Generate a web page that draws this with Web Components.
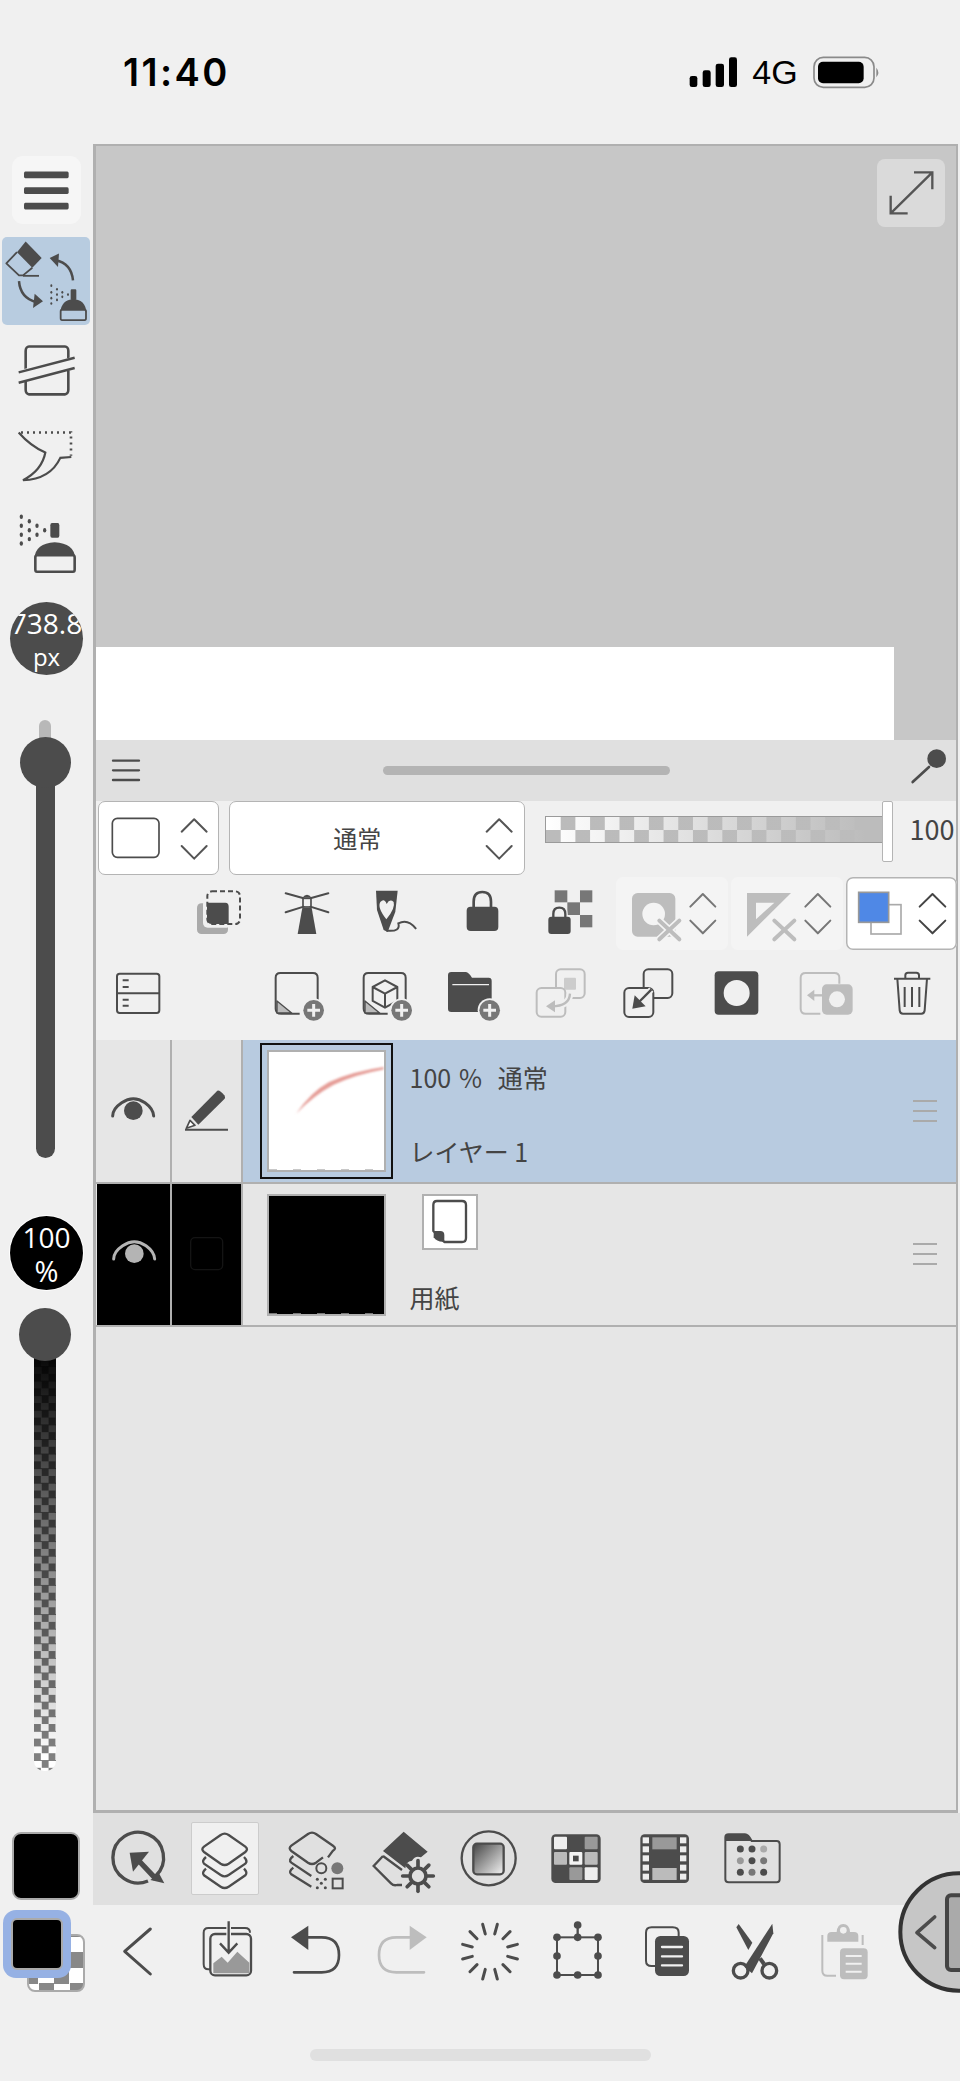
<!DOCTYPE html>
<html lang="ja">
<head>
<meta charset="utf-8">
<title>Layers</title>
<style>
html,body{margin:0;padding:0;background:#f0f0f0;overflow:hidden}
body{font-family:"Noto Sans CJK JP","Noto Sans",sans-serif;color:#444}
</style>
</head>
<body>
<app-shell></app-shell>
<script>
const D='#4c4c4c', G='#bdbdbd', BG='#f0f0f0';
const ICONS={};
function ic(name,x,y,w,h,inner,opt={}){ICONS[name]={x,y,w,h,inner,sx:opt.sx||1/3,sy:opt.sy||1/3,ns:opt.ns};}
const rail={sx:1/3,sy:1/2.24,ns:true};
const dots=(a)=>a.map(([x,y,r,c])=>`<circle cx="${x}" cy="${y}" r="${r}" fill="${c||D}" stroke="none"/>`).join('');
const plus=(cx,cy,bg)=>`<circle cx="${cx}" cy="${cy}" r="36" fill="${bg}" stroke="none"/><circle cx="${cx}" cy="${cy}" r="31" fill="#777" stroke="none"/><path d="M${cx-19} ${cy}H${cx+19}M${cx} ${cy-19}V${cy+19}" stroke="${bg}" stroke-width="9" stroke-linecap="butt"/>`;
const chev=(x0,x1,yU0,yU1,yD0,yD1,c,sw=6)=>{const m=(x0+x1)/2;return `<path d="M${x0} ${yU0}L${m} ${yU1}L${x1} ${yU0}M${x0} ${yD0}L${m} ${yD1}L${x1} ${yD0}" stroke="${c}" stroke-width="${sw}" stroke-linecap="round" stroke-linejoin="round"/>`;};
const ticks=(cx,cy,r0,r1,n,sw,c,off=0)=>{let s='';for(let i=0;i<n;i++){const a=(i+off)/n*Math.PI*2;s+=`<line x1="${(cx+Math.cos(a)*r0).toFixed(1)}" y1="${(cy+Math.sin(a)*r0).toFixed(1)}" x2="${(cx+Math.cos(a)*r1).toFixed(1)}" y2="${(cy+Math.sin(a)*r1).toFixed(1)}" stroke="${c}" stroke-width="${sw}" stroke-linecap="round"/>`;}return s;};

ic('signal',145,75,145,95,[[147,135,23,33],[186,118,24,50],[225,98,25,70],[265,79,24,89]].map(([x,y,w,h])=>`<rect x="${x}" y="${y}" width="${w}" height="${h}" rx="7" fill="#000" stroke="none"/>`).join(''));
ic('battery',520,74,205,96,`<rect x="523" y="78" width="180" height="90" rx="28" stroke="#8a8a8a" stroke-width="5"/><rect x="535" y="91" width="137" height="65" rx="15" fill="#000" stroke="none"/><path d="M710 109Q722 123 710 138Z" fill="#8a8a8a" stroke="none"/>`);
ic('expand',711,387,205,203,`<path d="M752 550L877 427M822 427H877V478M752 497V550H803" stroke="#555" stroke-width="7"/>`);

ic('r-menu',36,350,206,152,`<rect x="72" y="385" width="134" height="15" rx="4" fill="${D}" stroke="none"/><rect x="72" y="420" width="134" height="15" rx="4" fill="${D}" stroke="none"/><rect x="72" y="455" width="134" height="15" rx="4" fill="${D}" stroke="none"/>`,rail);
ic('r-swap',7,531,263,196,`
<path d="M52 565L78 541L126 578L98 600Z" fill="${D}" stroke="none"/>
<path d="M52 565L20 590L58 617L70 617L98 600" stroke="${D}" stroke-width="1.8" stroke-linejoin="round"/>
<path d="M70 618H118" stroke="${D}" stroke-width="1.8"/>
<path d="M220 628Q215 590 168 583" stroke="${D}" stroke-width="2.5"/><path d="M150 578L178 568L175 598Z" fill="${D}" stroke="none"/>
<path d="M58 630Q62 668 110 677" stroke="${D}" stroke-width="2.5"/><path d="M130 675L100 690L105 658Z" fill="${D}" stroke="none"/>
${dots([[155,640,3],[155,655,3],[155,668,3],[155,680,3],[172,648,3],[172,660,3],[172,672,3],[188,655,3],[188,665,3],[205,660,3]])}
<rect x="213" y="648" width="17" height="24" rx="3" fill="${D}" stroke="none"/>
<path d="M182 700Q185 672 221 670Q258 672 260 700Z" fill="${D}" stroke="none"/>
<rect x="183" y="694" width="76" height="23" rx="4" fill="#b8cce0" stroke="${D}" stroke-width="1.8"/>`,rail);
ic('r-ruler',50,770,178,123,`<rect x="76" y="778" width="128" height="107" rx="10" stroke="${D}" stroke-width="2.6"/>
<path d="M50 847L228 814L228 813L50 846Z" stroke="${BG}" stroke-width="12"/>
<path d="M55 836L223 803M55 859L223 826" stroke="${D}" stroke-width="2.4"/>`,rail);
ic('r-lasso',50,960,170,125,`<path d="M62 970H212V1022" stroke="${D}" stroke-width="2.6" stroke-dasharray="2 4"/>
<path d="M55 970Q90 1000 135 1015Q125 1055 68 1077Q150 1075 180 1027L213 1025" stroke="${D}" stroke-width="2.2"/>`,rail);
ic('r-spray',50,1145,180,145,`${dots([[63,1158,5],[63,1178,5],[63,1198,5],[63,1218,5],[87,1168,5],[87,1188,5],[87,1208,5],[110,1178,5],[110,1198,5],[133,1188,5]])}
<rect x="150" y="1172" width="27" height="33" rx="5" fill="${D}" stroke="none"/>
<path d="M103 1250Q105 1218 163 1215Q222 1218 224 1250Z" fill="${D}" stroke="none"/>
<rect x="105" y="1244" width="118" height="37" rx="5" fill="${BG}" stroke="${D}" stroke-width="2.6"/>`,rail);

ic('hamb',60,85,96,74,`<path d="M69 93H147M69 122H147M69 151H147" stroke="${D}" stroke-width="7" stroke-linecap="round"/>`);
ic('pin',1165,65,112,108,`<circle cx="1245" cy="97" r="28" fill="${D}" stroke="none"/><path d="M1173 167L1222 122" stroke="${D}" stroke-width="8" stroke-linecap="round"/>`);
ic('chev-a',270,255,85,135,chev(275,350,302,265,345,383,'#555'));
ic('sq',60,258,153,130,`<rect x="67" y="265" width="140" height="117" rx="15" stroke="${D}" stroke-width="5"/>`);

ic('opac',320,477,132,143,`<rect x="320" y="520" width="93" height="92" rx="13" fill="#aaa" stroke="none"/><rect x="338" y="508" width="85" height="85" rx="14" fill="${BG}" stroke="none"/><path d="M350 518H405Q415 518 415 530V582H365Q350 582 350 568Z" fill="${D}" stroke="none"/><rect x="351" y="484" width="98" height="98" rx="14" stroke="${D}" stroke-width="6" stroke-dasharray="15 9"/>`);
ic('light',584,477,133,143,`<path d="M586 490L640 505M714 490L660 505M586 547L640 530M714 547L660 530" stroke="${D}" stroke-width="6" stroke-linecap="round"/><rect x="638" y="505" width="24" height="26" fill="none" stroke="${D}" stroke-width="5"/><path d="M636 503Q650 485 664 503Z" fill="${D}" stroke="none"/><path d="M636 533H664L678 612H622Z" fill="${D}" stroke="none"/>`);
ic('nib',857,477,123,143,`<path d="M857 482H922L915 545L892 606L880 600L860 540Z" fill="${D}" stroke="none"/><path d="M888 568Q860 532 870 516Q882 503 889 522Q898 505 910 516Q916 534 888 568Z" fill="${BG}" stroke="none"/><path d="M890 602Q932 606 924 580Q952 565 976 595" stroke="${D}" stroke-width="6" stroke-linecap="round"/>`);
ic('lock',1128,477,98,143,`<path d="M1151 535V515Q1151 486 1177 486Q1203 486 1203 515V535" stroke="${D}" stroke-width="8"/><rect x="1130" y="530" width="95" height="73" rx="12" fill="${D}" stroke="none"/>`);
ic('cklock',84,477,134,143,`<rect x="104" y="481" width="38" height="36" fill="#777" stroke="none"/><rect x="180" y="481" width="37" height="36" fill="#777" stroke="none"/><rect x="142" y="517" width="38" height="38" fill="#777" stroke="none"/><rect x="180" y="555" width="37" height="37" fill="#777" stroke="none"/><path d="M100 565V552Q100 533 118 533Q136 533 136 552V565" stroke="${BG}" stroke-width="14"/><path d="M100 565V552Q100 533 118 533Q136 533 136 552V565" stroke="${D}" stroke-width="7"/><rect x="85" y="560" width="67" height="52" rx="9" fill="${D}" stroke="none"/>`);
const cross=(cx,cy,bg)=>`<path d="M${cx-30} ${cy-28}L${cx+30} ${cy+28}M${cx+30} ${cy-28}L${cx-30} ${cy+28}" stroke="${bg}" stroke-width="22" /><path d="M${cx-30} ${cy-28}L${cx+30} ${cy+28}M${cx+30} ${cy-28}L${cx-30} ${cy+28}" stroke="${G}" stroke-width="12" stroke-linecap="round"/>`;
ic('dd-clip',287,441,336,218,`<rect x="335" y="489" width="130" height="131" rx="17" fill="${G}" stroke="none"/><circle cx="400" cy="552" r="34" fill="#f4f4f4" stroke="none"/>${cross(447,600,'#f4f4f4')}${chev(510,585,530,492,572,610,'#777')}`);
ic('dd-tri',632,441,336,218,`<path d="M680 489H812L680 620Z" fill="${G}" stroke="none"/><path d="M707 518H762L707 568Z" fill="#f4f4f4" stroke="none"/>${cross(792,600,'#f4f4f4')}${chev(855,930,530,492,572,610,'#777')}`);
ic('dd-color',977,441,334,218,`<rect x="1052" y="524" width="90" height="88" fill="#fff" stroke="#aaa" stroke-width="5"/><rect x="1015" y="487" width="90" height="90" fill="#4f88e6" stroke="#999" stroke-width="5"/>${chev(1198,1275,530,492,572,610,'#444')}`);

ic('list',78,710,132,155,`<rect x="81" y="730" width="127" height="118" rx="8" stroke="${D}" stroke-width="6"/><path d="M81 789H208M98 750H116M98 770H116M98 808H116M98 826H116" stroke="${D}" stroke-width="6"/>`);
ic('addr',553,710,155,155,`<path d="M630 850H575Q558 850 558 835V742Q558 728 572 728H670Q684 728 684 742V810" stroke="${D}" stroke-width="6"/><path d="M562 812L606 848H562Z" fill="#bbb" stroke="${D}" stroke-width="4" stroke-linejoin="round"/>${plus(672,840,BG)}`);
ic('add3d',816,710,156,155,`<path d="M893 850H838Q821 850 821 835V742Q821 728 835 728H933Q947 728 947 742V810" stroke="${D}" stroke-width="6"/><path d="M825 812L869 848H825Z" fill="#bbb" stroke="${D}" stroke-width="4" stroke-linejoin="round"/><path d="M885 750L922 770V812L885 832L848 812V770ZM848 770L885 790L922 770M885 790V832" stroke="${D}" stroke-width="6" stroke-linejoin="round"/>${plus(935,840,BG)}`);
ic('addf',1070,710,165,155,`<path d="M1073 735Q1073 725 1083 725H1125Q1135 725 1145 742H1195Q1204 742 1204 752V835Q1204 845 1195 845H1083Q1073 845 1073 835Z" fill="${D}" stroke="none"/><path d="M1086 763H1196" stroke="${BG}" stroke-width="4"/>${plus(1198,840,BG)}`);
ic('movd',45,710,153,155,`<rect x="108" y="717" width="86" height="86" rx="14" stroke="${G}" stroke-width="6"/><rect x="132" y="742" width="36" height="36" rx="3" fill="#ccc" stroke="none"/><rect x="50" y="773" width="86" height="86" rx="14" fill="${BG}" stroke="${G}" stroke-width="6"/><path d="M150 790Q148 828 95 828" stroke="${BG}" stroke-width="20"/><path d="M150 790Q148 828 95 828" stroke="${G}" stroke-width="7"/><path d="M78 828L105 810V846Z" fill="${G}" stroke="none"/>`);
ic('merge',310,710,152,155,`<rect x="372" y="717" width="86" height="86" rx="14" stroke="${D}" stroke-width="6"/><rect x="314" y="773" width="87" height="87" rx="14" fill="${BG}" stroke="${D}" stroke-width="6"/><path d="M395 778L360 813" stroke="${BG}" stroke-width="18"/><path d="M395 778L358 815" stroke="${D}" stroke-width="7"/><path d="M338 835L345 795L378 828Z" fill="${D}" stroke="none"/>`);
ic('mask',582,710,135,155,`<rect x="584" y="723" width="131" height="130" rx="12" fill="${D}" stroke="none"/><circle cx="650" cy="788" r="39" fill="${BG}" stroke="none"/>`);
ic('cam',836,710,164,155,`<path d="M900 850H856Q841 850 841 835V742Q841 728 856 728H942Q957 728 957 742V760" stroke="${G}" stroke-width="6"/><rect x="905" y="762" width="92" height="91" rx="14" fill="${G}" stroke="none"/><circle cx="950" cy="807" r="24" fill="${BG}" stroke="none"/><path d="M875 795H905" stroke="${G}" stroke-width="7"/><path d="M860 795L882 778V812Z" fill="${G}" stroke="none"/>`);
ic('trash',1120,710,115,155,`<path d="M1123 745H1232M1157 745V735Q1157 727 1165 727H1190Q1198 727 1198 735V745M1133 745L1140 840Q1141 850 1150 850H1205Q1214 850 1215 840L1222 745M1155 770V830M1177 770V830M1199 770V830" stroke="${D}" stroke-width="6"/>`);

const eye=(c)=>`<path d="M68 256Q68 234 95 216Q130 192 165 216Q190 234 191 256" stroke="${c}" stroke-width="9" stroke-linecap="round"/><circle cx="130" cy="240" r="28" fill="${c}" stroke="none"/>`;
ic('eye',60,190,138,90,eye(D));
ic('eye2',60,190,138,90,eye('#b4b4b4'));
ic('pen',272,178,140,130,`<path d="M375 183Q382 180 396 197Q400 204 397 207L318 285L297 262Z" fill="${D}" stroke="none"/><path d="M293 272L282 296L308 287Z" fill="#fff" stroke="${D}" stroke-width="5" stroke-linejoin="round"/><path d="M278 300H407" stroke="${D}" stroke-width="6"/>`);
ic('blank',300,616,112,112,`<rect x="308" y="624" width="96" height="96" rx="13" stroke="#141414" stroke-width="4"/>`);
ic('paper',1022,510,112,136,`<path d="M1040 516H1115Q1127 516 1127 528V627Q1127 639 1115 639H1062L1029 606V528Q1029 516 1040 516Z" fill="#fff" stroke="${D}" stroke-width="7" stroke-linejoin="round"/><path d="M1030 606H1050Q1062 606 1062 618V638Q1040 640 1030 625Z" fill="${D}" stroke="none"/>`);

ic('s-sel',328,150,170,190,`<path d="M468 288A76 76 0 1 0 445 303" stroke="${D}" stroke-width="10"/><path d="M390 218L448 215L400 275Z" fill="${D}" stroke="none"/><path d="M418 243L468 296" stroke="${D}" stroke-width="16"/><path d="M452 300L478 280L494 310Z" fill="${D}" stroke="none"/>`);
const dia=(cx,cy)=>`M${cx-62} ${cy-8}L${cx-12} ${cy-43}Q${cx} ${cy-51} ${cx+12} ${cy-43}L${cx+62} ${cy-8}Q${cx+72} ${cy} ${cx+62} ${cy+8}L${cx+12} ${cy+43}Q${cx} ${cy+51} ${cx-12} ${cy+43}L${cx-62} ${cy+8}Q${cx-72} ${cy} ${cx-62} ${cy-8}Z`;
const lay=(cx,dy)=>`M${cx-56} ${228+dy}Q${cx-70} ${240+dy} ${cx-62} ${248+dy}L${cx-12} ${282+dy}Q${cx} ${290+dy} ${cx+12} ${282+dy}L${cx+62} ${248+dy}Q${cx+70} ${240+dy} ${cx+58} ${228+dy}`;
ic('s-lay',600,150,148,190,`<path d="${dia(674,205)}${lay(674,0)}${lay(674,35)}" stroke="${D}" stroke-width="7"/>`);
ic('s-prop',865,150,170,190,`<path d="M985 232L1000 212Q1012 205 1000 197L949 162Q937 154 925 162L875 197Q865 205 875 213L925 248Q937 256 949 248L970 232" stroke="${D}" stroke-width="7"/><path d="M881 228Q865 240 875 248L935 288M881 263Q865 275 875 283L935 320" stroke="${D}" stroke-width="7"/><circle cx="965" cy="265" r="15" stroke="${D}" stroke-width="6"/><circle cx="1013" cy="265" r="18" fill="#777" stroke="none"/><rect x="999" y="296" width="30" height="29" stroke="${D}" stroke-width="6"/>${dots([[953,298,4.5],[977,298,4.5],[965,310,4.5],[953,323,4.5],[977,323,4.5]])}`);
ic('s-era',1115,150,193,190,`<path d="M1148 213L1210 155L1282 215L1262 232Q1245 225 1235 242Q1215 245 1215 265Z" fill="${D}" stroke="none"/><path d="M1148 228L1120 258L1172 310Q1180 318 1190 315H1205M1148 228L1205 270" stroke="${D}" stroke-width="7"/>${ticks(1253,288,28,46,8,11,D,0)}<circle cx="1253" cy="288" r="24" fill="#e0e0e0" stroke="${D}" stroke-width="11"/>`);
ic('s-grad',1380,150,172,190,`<defs><linearGradient id="gg" x1="0" y1="0" x2="1" y2="1"><stop offset="0" stop-color="#444"/><stop offset="1" stop-color="#f4f4f4"/></linearGradient></defs><circle cx="1466" cy="235" r="81" stroke="${D}" stroke-width="7"/><rect x="1420" y="191" width="91" height="92" rx="11" fill="url(#gg)" stroke="${D}" stroke-width="7"/>`);
const gc=[['#eee',224,170],[D,270,170],['#999',316,170],['#bbb',224,216],['#f4f4f4',270,216],['#bbb',316,216],[D,224,262],['#999',270,262],['#eee',316,262]];
ic('s-grid',212,150,156,190,`<rect x="216" y="163" width="148" height="146" rx="13" fill="${D}" stroke="none"/>${gc.map(([c,x,y])=>`<rect x="${x}" y="${y}" width="39" height="38" rx="3" fill="${c}" stroke="none"/>`).join('')}<rect x="281" y="227" width="17" height="17" fill="${D}" stroke="none"/>`);
const holes=[172,199,226,254,281];
ic('s-film',477,150,154,190,`<rect x="481" y="163" width="146" height="146" rx="13" fill="${D}" stroke="none"/>${holes.map(y=>`<rect x="488" y="${y}" width="19" height="18" fill="#eee" stroke="none"/><rect x="600" y="${y}" width="19" height="18" fill="#eee" stroke="none"/>`).join('')}<rect x="517" y="172" width="73" height="36" fill="#999" stroke="none"/><rect x="517" y="264" width="73" height="36" fill="#bbb" stroke="none"/>`);
const dc=[[D,D,'#aaa'],['#999',D,'#777'],[D,'#777',D]];
ic('s-fold',732,150,171,190,`<path d="M736 172Q736 163 746 163H795Q805 163 815 183H890Q899 183 899 193V298Q899 307 890 307H746Q736 307 736 298Z" stroke="${D}" stroke-width="6" fill="#e0e0e0"/><path d="M736 172Q736 163 746 163H795Q805 163 815 183H736Z" fill="${D}" stroke="none"/>${dc.map((r,j)=>r.map((c,i)=>`<circle cx="${781+i*35}" cy="${207+j*35}" r="10.5" fill="${c}" stroke="none"/>`).join('')).join('')}`);

ic('t-back',365,420,93,180,`<path d="M450 447L373 514L450 582" stroke="${D}" stroke-width="9" stroke-linecap="round" stroke-linejoin="round"/>`);
ic('t-imp',603,420,157,180,`<path d="M630 568H625Q611 568 611 552V458Q611 444 625 444H735Q750 444 750 458" stroke="${D}" stroke-width="6"/><rect x="631" y="462" width="122" height="124" rx="14" fill="${BG}" stroke="${D}" stroke-width="7"/><path d="M640 580V550L665 530L683 548L712 515L748 548V580Z" fill="#999" stroke="none"/><path d="M686 424V518M660 490L686 518L712 490" stroke="${BG}" stroke-width="14"/><path d="M686 424V518M660 490L686 518L712 490" stroke="${D}" stroke-width="7"/>`);
ic('t-undo',870,420,152,180,`<path d="M873 472L925 437V510Z" fill="${D}" stroke="none"/><path d="M925 472H965Q1017 472 1017 525Q1017 577 965 577H882" stroke="${D}" stroke-width="8" stroke-linecap="round"/>`);
ic('t-redo',1132,420,153,180,`<path d="M1281 472L1230 437V510Z" fill="${G}" stroke="none"/><path d="M1230 472H1190Q1138 472 1138 525Q1138 577 1190 577H1273" stroke="${G}" stroke-width="8" stroke-linecap="round"/>`);
ic('t-spin',1386,420,168,180,ticks(1470,515,55,85,12,9,D,.5));
const hs=[[235,472],[297,472],[358,472],[235,528],[358,528],[235,585],[297,585],[358,585],[297,435]];
ic('t-tr',220,420,155,180,`<rect x="235" y="472" width="123" height="113" stroke="${D}" stroke-width="6"/><path d="M297 472V435" stroke="${D}" stroke-width="7"/>${dots(hs.map(([x,y])=>[x,y,11.5]))}`);
ic('t-copy',492,420,138,180,`<path d="M530 558H515Q498 558 498 542V458Q498 442 515 442H578Q596 442 596 458V470" stroke="${D}" stroke-width="6"/><rect x="525" y="468" width="102" height="120" rx="16" fill="${D}" stroke="none"/><path d="M546 501H606M546 529H606M546 556H606" stroke="${BG}" stroke-width="7" stroke-linecap="round"/>`);
ic('t-sci',750,420,148,180,`<path d="M769 442L776 432L817 488L805 510Z" fill="${D}" stroke="none"/><path d="M877 431L880 460L816 580L793 560Z" fill="${D}" stroke="none"/><path d="M840 535L852 552" stroke="${D}" stroke-width="12"/><circle cx="782" cy="572" r="22" stroke="${D}" stroke-width="10"/><circle cx="868" cy="572" r="22" stroke="${D}" stroke-width="10"/>`);
ic('t-paste',1020,420,148,180,`<path d="M1068 587H1042Q1027 587 1027 572V465M1148 465V495" stroke="${G}" stroke-width="6"/><path d="M1042 485V468Q1042 456 1055 456H1070Q1072 432 1090 432Q1108 432 1110 456H1122Q1135 456 1135 468V485Z" fill="${G}" stroke="none"/><circle cx="1090" cy="451" r="10" fill="${BG}" stroke="none"/><rect x="1080" y="505" width="83" height="93" rx="12" fill="${G}" stroke="none"/><path d="M1097 528H1145M1097 551H1145M1097 575H1145" stroke="${BG}" stroke-width="6"/>`);
ic('round',1255,272,185,366,`<circle cx="1438" cy="455" r="176" fill="#c6c6c6" stroke="#333" stroke-width="12"/><path d="M1365 410L1312 457L1365 502" stroke="${D}" stroke-width="11" stroke-linecap="round" stroke-linejoin="round"/><rect x="1402" y="345" width="80" height="224" rx="12" fill="#aaa" stroke="#444" stroke-width="12"/>`);

function define(tag,html){
  customElements.define(tag,class extends HTMLElement{
    constructor(){super();this.attachShadow({mode:'open'}).innerHTML=html;}
  });
}

customElements.define('app-icon',class extends HTMLElement{
  connectedCallback(){
    if(this.shadowRoot)return;
    const i=ICONS[this.getAttribute('name')];
    const r=this.attachShadow({mode:'open'});
    r.innerHTML=`<style>:host{display:block;flex:none;width:${i.w*i.sx}px;height:${i.h*i.sy}px;line-height:0}
    svg{display:block;width:100%;height:100%;overflow:visible}${i.ns?'svg *{vector-effect:non-scaling-stroke}':''}</style>
    <svg viewBox="${i.x} ${i.y} ${i.w} ${i.h}" preserveAspectRatio="none" fill="none">${i.inner}</svg>`;
  }
});

define('status-bar',`<style>
:host{display:flex;align-items:center;height:143px;padding-left:123px;box-sizing:border-box;color:#000}
.t{font:600 38px/1 Inter,"Liberation Sans",sans-serif;width:566px;letter-spacing:2.4px}
.n{font:400 34px/1 "Liberation Sans",sans-serif;margin:0 15.5px 0 15px}
</style><span class="t">11:40</span><app-icon name="signal"></app-icon><span class="n">4G</span><app-icon name="battery"></app-icon>`);

define('round-dial',`<style>
:host{display:flex;flex-direction:column;align-items:center;justify-content:center;border-radius:50%;width:73px;overflow:hidden;color:#fff;box-sizing:border-box;padding-top:3px;
font:400 28px/34px "Open Sans","Noto Sans",sans-serif;white-space:nowrap;text-align:center}
</style><slot></slot>`);

define('rail-brush',`<style>
:host{display:block;position:relative;width:93px;height:438px}
.s{position:absolute;left:39px;top:0;width:12px;height:30px;border-radius:6px;background:#b8b8b8}
.t{position:absolute;left:36px;top:25px;bottom:0;width:19px;border-radius:0 0 10px 10px;background:#4c4c4c}
.k{position:absolute;left:20px;top:17px;width:51px;height:51px;border-radius:50%;background:#4c4c4c}
</style><div class="s"></div><div class="t"></div><div class="k"></div>`);

define('rail-opacity',`<style>
:host{display:block;position:relative;width:93px;height:463px}
.t{position:absolute;left:34px;top:22px;bottom:0;width:22px;border-radius:0 0 10px 10px;
background:linear-gradient(#000 3%,rgba(0,0,0,0) 97%),repeating-conic-gradient(#fff 0 25%,#808080 0 50%) 0 0/14.6px 14.6px}
.k{position:absolute;left:19px;top:0;width:52px;height:53px;border-radius:50%;background:#4c4c4c}
</style><div class="t"></div><div class="k"></div>`);

define('color-swatches',`<style>
:host{display:block;width:93px}
.fg{width:68px;height:68px;box-sizing:border-box;margin:0 0 10px 12px;background:#000;border:2.5px solid #aaa;border-radius:9px}
.pair{position:relative;width:85px;height:82px}
.bg{position:absolute;left:27px;top:24px;width:58px;height:58px;box-sizing:border-box;border:2.5px solid #aaa;border-radius:8px;
background:repeating-conic-gradient(#fff 0 25%,#888 0 50%) -6px 1px/31px 31px}
.cur{position:absolute;left:3px;top:0;width:68px;height:68px;box-sizing:border-box;border-radius:13px;background:#96b1e4;padding:8px}
.cur div{width:100%;height:100%;box-sizing:border-box;background:#000;border:2px solid #aaa;border-radius:6px}
</style><div class="fg"></div><div class="pair"><div class="bg"></div><div class="cur"><div></div></div></div>`);

define('side-rail',`<style>
:host{display:flex;flex-direction:column;align-items:flex-start;width:93px}
.menu{margin:12.25px 0 0 12px;background:#f6f6f6;border-radius:11px}
.sel{margin:13px 0 0 2.3px;background:#b8cce0;border-radius:5px}
.a{margin:18.7px 0 0 16.7px}.b{margin:30px 0 0 16.7px}.c{margin:26.6px 0 0 16.7px}
round-dial{margin-left:10px;height:73px}
.d1{margin-top:27px;background:#4c4c4c}
.d2{margin-top:58px;height:74px;background:#000;box-shadow:0 0 0 1px #fff}
rail-brush{margin-top:44.7px}rail-opacity{margin-top:18px}color-swatches{margin-top:61px}
</style>
<app-icon class="menu" name="r-menu"></app-icon>
<app-icon class="sel" name="r-swap"></app-icon>
<app-icon class="a" name="r-ruler"></app-icon>
<app-icon class="b" name="r-lasso"></app-icon>
<app-icon class="c" name="r-spray"></app-icon>
<round-dial class="d1"><span>738.8</span><span style="font-size:24px">px</span></round-dial>
<rail-brush></rail-brush>
<round-dial class="d2"><span>100</span><span style="font-size:29px">%</span></round-dial>
<rail-opacity></rail-opacity>
<color-swatches></color-swatches>`);

define('canvas-view',`<style>
:host{display:flex;flex-direction:column;justify-content:flex-end;position:relative;height:594px;background:#c7c7c7;box-sizing:border-box}
.paper{width:798px;height:93px;background:#fff}
.exp{position:absolute;right:11px;top:13px;background:#dadada;border-radius:8px}
</style><div class="paper"></div><app-icon class="exp" name="expand"></app-icon>`);

define('panel-select',`<style>
:host{display:flex;align-items:center;box-sizing:border-box;height:74px;background:#fff;border:1.5px solid #b4b4b4;border-radius:7px;font:400 24px/1 "Noto Sans CJK JP",sans-serif;color:#444}
.l{flex:1;text-align:center}
app-icon{margin-right:11px}
</style><div class="l"><slot></slot></div><app-icon name="chev-a"></app-icon>`);

define('opacity-slider',`<style>
:host{display:flex;align-items:flex-start;height:74px}
.tr{margin-top:15px;width:337px;height:27px;box-sizing:border-box;border:1px solid #9a9a9a;border-width:1px 0 1px 1px;
background:linear-gradient(90deg,rgba(189,189,189,0),#bcbcbc 95%),repeating-conic-gradient(#bbb 0 25%,#fff 0 50%) 0 0/29.4px 26px}
.h{width:11px;height:61px;box-sizing:border-box;background:#fff;border:1px solid #b4b4b4;border-radius:2px}
.v{margin:13px 0 0 16.5px;font:400 27px/30px "Noto Sans CJK JP","Noto Sans",sans-serif;color:#444}
</style><div class="tr"></div><div class="h"></div><div class="v">100</div>`);

define('layer-props',`<style>
:host{display:block;background:#f0f0f0;height:238.5px}
.ra{display:flex;padding-left:2px;height:76px}
.s2{width:296px;margin-left:10px}
opacity-slider{margin-left:20px}
.rb{display:flex;align-items:flex-start;height:73px}
.rb>app-icon{margin-top:12px}
.rb>.dd{margin-top:0;border-radius:7px;background:#f4f4f4}
.rb>.wh{background:#fff;box-shadow:inset 0 0 0 1.5px #b4b4b4}
.rc{display:flex;align-items:flex-start;padding-top:16.67px}
.box1{display:flex;align-items:center;width:121px;height:74px;box-sizing:border-box;background:#fff;border:1.5px solid #b4b4b4;border-radius:7px;padding-left:10.5px}
.box1 .c{margin-left:19px}
</style>
<div class="ra">
<div class="box1"><app-icon name="sq"></app-icon><app-icon class="c" name="chev-a"></app-icon></div>
<panel-select class="s2">通常</panel-select>
<opacity-slider></opacity-slider>
</div>
<div class="rb">
<app-icon name="opac" style="margin-left:100.7px"></app-icon>
<app-icon name="light" style="margin-left:44px"></app-icon>
<app-icon name="nib" style="margin-left:46.7px"></app-icon>
<app-icon name="lock" style="margin-left:49.3px"></app-icon>
<app-icon name="cklock" style="margin-left:49.3px"></app-icon>
<app-icon class="dd" name="dd-clip" style="margin-left:23px"></app-icon>
<app-icon class="dd" name="dd-tri" style="margin-left:3px"></app-icon>
<app-icon class="dd wh" name="dd-color" style="margin-left:3px"></app-icon>
</div>
<div class="rc">
<app-icon name="list" style="margin-left:20px"></app-icon>
<app-icon name="addr" style="margin-left:114.3px"></app-icon>
<app-icon name="add3d" style="margin-left:36px"></app-icon>
<app-icon name="addf" style="margin-left:32.7px"></app-icon>
<app-icon name="movd" style="margin-left:33.3px"></app-icon>
<app-icon name="merge" style="margin-left:37.3px"></app-icon>
<app-icon name="mask" style="margin-left:40px"></app-icon>
<app-icon name="cam" style="margin-left:39.7px"></app-icon>
<app-icon name="trash" style="margin-left:40px"></app-icon>
</div>`);

define('layer-row',`<style>
:host{display:flex;height:144px;box-sizing:border-box;border-bottom:2.5px solid #b0b0b0;background:#e6e6e6;font:400 25px/34px "Noto Sans CJK JP",sans-serif;color:#444}
:host([last]){height:143px}
.eye,.pen{display:flex;align-items:center;justify-content:center;box-sizing:border-box;border-right:2px solid #b0b0b0}
.eye{width:76px}.pen{width:71px}
:host([paper]) .eye,:host([paper]) .pen{background:#000}
:host([paper]) .eye{margin-left:1px;width:75px}
.eye ::slotted(*){margin-top:-4px}
.main{flex:1;display:flex;position:relative}
:host([selected]) .main{background:#b8cbe0}
.th{flex:none;margin:10.5px 0 0 23.5px;width:119px;height:122px;box-sizing:border-box;border:2.3px solid #b0b0b0;background:repeating-linear-gradient(90deg,#c8c8c8 0 8px,transparent 8px 24px) bottom/100% 1.5px no-repeat,#fff}
:host([selected]) .th{outline:2.4px solid #111;outline-offset:5px}
:host([paper]) .th{background:repeating-linear-gradient(90deg,#777 0 8px,transparent 8px 24px) bottom/100% 1.5px no-repeat,#000}
.meta{flex:1;display:flex;flex-direction:column;justify-content:space-between;margin-left:24px;padding:10px 0 11px}
.gr{flex:none;align-self:center;width:24px;margin-right:19px;height:22px;background:linear-gradient(#aaa,#aaa) 0 0/100% 2px no-repeat,linear-gradient(#aaa,#aaa) 0 50%/100% 2px no-repeat,linear-gradient(#aaa,#aaa) 0 100%/100% 2px no-repeat}
</style>
<div class="eye"><slot name="eye"></slot></div>
<div class="pen"><slot name="pen"></slot></div>
<div class="main"><div class="th"><slot name="thumb"></slot></div>
<div class="meta"><slot name="top"></slot><slot name="name"></slot></div><div class="gr"></div></div>`);

define('stroke-thumb',`<style>:host{display:block;width:100%;height:100%}svg{display:block;width:100%;height:100%}</style>
<svg viewBox="537 69 343 350" fill="none"><defs><filter id="b" x="-10%" y="-10%" width="120%" height="120%"><feGaussianBlur stdDeviation="2.4"/></filter></defs>
<g filter="url(#b)"><path d="M618 252Q662 187 715 158Q790 125 880 113L878 120Q790 136 730 166Q670 198 618 252Z" fill="#e59c96"/></g></svg>`);

define('layer-list',`<style>
:host{display:block;flex:1;background:#e6e6e6}
.t{display:block;white-space:pre;margin-top:10px;word-spacing:2.3px}
.p{box-sizing:border-box;width:56px;height:56px;margin-left:12px;background:#fff;border:2px solid #b0b0b0;display:flex;align-items:center;justify-content:center}
.n{display:block}
.n1{margin-bottom:2.5px}
</style>
<layer-row selected>
<app-icon slot="eye" name="eye"></app-icon><app-icon slot="pen" name="pen"></app-icon>
<stroke-thumb slot="thumb"></stroke-thumb>
<span slot="top" class="t">100 %  通常</span><span slot="name" class="n n1">レイヤー 1</span>
</layer-row>
<layer-row paper last>
<app-icon slot="eye" name="eye2"></app-icon><app-icon slot="pen" name="blank"></app-icon>
<span slot="top" class="p"><app-icon name="paper"></app-icon></span><span slot="name" class="n">用紙</span>
</layer-row>`);

define('layer-panel',`<style>
:host{display:flex;flex-direction:column;flex:1}
.hd{display:flex;align-items:center;position:relative;height:61px;background:#e0e0e0;box-sizing:border-box}
.hd .m{margin-left:14px}
.pill{margin-left:241px;width:287px;height:9px;border-radius:5px;background:#b4b4b4;flex:none}
.hd .p{margin-left:auto;margin-right:8.7px;align-self:flex-start;margin-top:8px}
</style>
<div class="hd"><app-icon class="m" name="hamb"></app-icon><div class="pill"></div><app-icon class="p" name="pin"></app-icon></div>
<layer-props></layer-props>
<layer-list></layer-list>`);

define('work-area',`<style>
:host{display:flex;flex-direction:column;box-sizing:border-box;height:1669px;width:865px;border:solid #b0b0b0;border-width:2.5px 2.5px 3px 3px}
</style><canvas-view></canvas-view><layer-panel></layer-panel>`);

define('bottom-strip',`<style>
:host{display:flex;align-items:flex-start;height:92px;background:#e0e0e0}
app-icon{margin-top:17px}
.on{flex:none;box-sizing:border-box;margin:9px 0 0 25px;width:68px;height:73px;background:#f0f0f0;border:1px solid #ccc;border-radius:2px;padding:8px 0 0 8px}
.on app-icon{margin:0}
</style>
<app-icon name="s-sel" style="margin-left:16.3px"></app-icon>
<div class="on"><app-icon name="s-lay"></app-icon></div>
<app-icon name="s-prop" style="margin-left:29.3px"></app-icon>
<app-icon name="s-era" style="margin-left:26.7px"></app-icon>
<app-icon name="s-grad" style="margin-left:24px"></app-icon>
<app-icon name="s-grid" style="margin-left:33px"></app-icon>
<app-icon name="s-film" style="margin-left:36.5px"></app-icon>
<app-icon name="s-fold" style="margin-left:33.7px"></app-icon>`);

define('bottom-toolbar',`<style>
:host{display:flex;flex-direction:column}
.r{display:flex;align-items:flex-start;padding-top:15px;height:60px}
.home{margin:69px 0 0 217px;width:341px;height:12px;border-radius:6px;background:#e0e0e0}
</style>
<div class="r">
<app-icon name="t-back" style="margin-left:28.7px"></app-icon>
<app-icon name="t-imp" style="margin-left:48.3px"></app-icon>
<app-icon name="t-undo" style="margin-left:36.7px"></app-icon>
<app-icon name="t-redo" style="margin-left:36.7px"></app-icon>
<app-icon name="t-spin" style="margin-left:33.7px"></app-icon>
<app-icon name="t-tr" style="margin-left:34px"></app-icon>
<app-icon name="t-copy" style="margin-left:40px"></app-icon>
<app-icon name="t-sci" style="margin-left:40px"></app-icon>
<app-icon name="t-paste" style="margin-left:40.7px"></app-icon>
</div>
<div class="home"></div>`);

define('app-shell',`<style>
:host{display:grid;grid-template-columns:93px 1fr;grid-template-rows:144px auto;width:960px;height:2081px;position:relative;overflow:hidden;background:#f0f0f0}
status-bar{grid-column:1/3}
.m{display:flex;flex-direction:column;min-width:0}
.rb{position:absolute;right:0;top:1871px;overflow:hidden}
</style>
<status-bar></status-bar>
<side-rail></side-rail>
<div class="m"><work-area></work-area><bottom-strip></bottom-strip><bottom-toolbar></bottom-toolbar></div>
<app-icon class="rb" name="round"></app-icon>`);
</script>
</body>
</html>
